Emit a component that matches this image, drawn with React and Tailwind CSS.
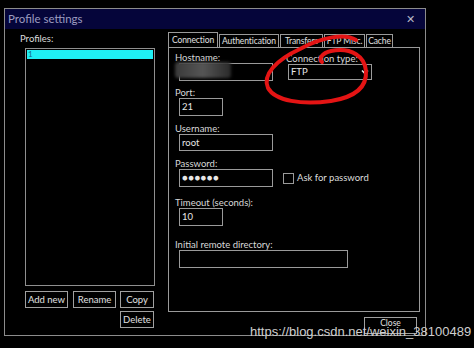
const ui = { fontFamily: 'Lato, "Noto Sans", sans-serif' };

function Field({ w, h = 18, children, className = "" }) {
  return (
    <div
      className={`flex items-center border border-[#9a9a9a] px-[2px] text-[9.5px] leading-none text-[#e6e6e6] ${className}`}
      style={{ width: w, height: h }}
    >
      {children}
    </div>
  );
}

function Label({ children, className = "" }) {
  return <div className={`h-[10px] text-[9.5px] leading-[10px] text-[#d8d8d8] ${className}`}>{children}</div>;
}

function Btn({ children, w, className = "" }) {
  return (
    <div
      className={`flex h-[17px] items-center justify-center border border-[#a0a0a0] text-[9.5px] leading-none text-[#e0e0e0] ${className}`}
      style={{ width: w }}
    >
      {children}
    </div>
  );
}

const tabs = [
  { name: "Connection", w: 50 },
  { name: "Authentication", w: 60 },
  { name: "Transfers", w: 43 },
  { name: "FTP Misc.", w: 41 },
  { name: "Cache", w: 27 },
];

export default function App() {
  return (
    <div className="relative h-[348px] w-[474px] overflow-hidden bg-black" style={ui}>
      <div className="ml-[4px] pt-[8px]">
        <div className="h-[328px] w-[422px] border border-[#8c8c8c]">
          {/* title bar */}
          <div className="flex h-[20px] items-center justify-between bg-[#05053a] pl-[3px] pr-[10px]">
            <span className="text-[11.5px] text-[#9c9cc0]">Profile settings</span>
            <span className="text-[11px] text-[#b8b8c8]">✕</span>
          </div>

          <div className="flex">
            {/* left column */}
            <div className="w-[158px] pl-[15px] pt-[4px]">
              <div className="h-[11px] text-[9.5px] leading-[11px] text-[#dcdcdc]">Profiles:</div>
              <div className="ml-[5px] mt-[4px] h-[238px] w-[130px] border border-[#8f8f8f] p-[1px]">
                <div className="h-[9px] bg-[#1ff0f5] pl-[1px] text-[8px] leading-[9px] text-[#1a6a8a]">1</div>
              </div>
              <div className="ml-[5px] mt-[5px] flex gap-[5px]">
                <Btn w={43}>Add new</Btn>
                <Btn w={43}>Rename</Btn>
                <Btn w={34} className="ml-[-1px]">Copy</Btn>
              </div>
              <div className="ml-[100px] mt-[3px]">
                <Btn w={34}>Delete</Btn>
              </div>
            </div>

            {/* right column */}
            <div className="pl-[5px] pt-[3px]">
              <div className="flex items-end">
                {tabs.map((t, i) => (
                  <div
                    key={t.name}
                    className={`flex items-center justify-center overflow-hidden whitespace-nowrap border border-b-0 border-[#9a9a9a] text-[8.5px] leading-none tracking-[-0.1px] text-[#e0e0e0] ${
                      i === 0 ? "h-[15px]" : "ml-[1px] h-[13px]"
                    }`}
                    style={{ width: t.w }}
                  >
                    {t.name}
                  </div>
                ))}
              </div>
              <div className="h-[265px] w-[252px] border border-[#9a9a9a] pl-[6px] pt-[5px]">
                <div className="flex">
                  <div className="w-[111px]">
                    <Label>Hostname:</Label>
                    <Field w={94} className="ml-[4px]" />
                  </div>
                  <div className="pt-[1px]">
                    <Label>Connection type:</Label>
                    <div className="ml-[2px] flex h-[16px] w-[84px] items-center justify-between border border-[#9a9a9a] pl-[2px] pr-[2px] text-[9.5px] text-[#e6e6e6]">
                      <span>FTP</span>
                      <svg width="8" height="6" viewBox="0 0 8 6">
                        <path d="M1 1.5 L4 4.5 L7 1.5" stroke="#e6e6e6" strokeWidth="1.6" fill="none" />
                      </svg>
                    </div>
                  </div>
                </div>

                <Label className="mt-[7px]">Port:</Label>
                <Field w={44} className="ml-[4px]">21</Field>

                <Label className="mt-[8px]">Username:</Label>
                <Field w={94} h={17} className="ml-[4px]">root</Field>

                <Label className="mt-[8px]">Password:</Label>
                <div className="flex items-center">
                  <Field w={94} className="ml-[4px] text-[8px] tracking-[0.5px]">●●●●●●</Field>
                  <div className="ml-[10px] h-[11px] w-[11px] border border-[#9a9a9a]" />
                  <span className="ml-[3px] text-[9.5px] text-[#dcdcdc]">Ask for password</span>
                </div>

                <Label className="mt-[11px]">Timeout (seconds):</Label>
                <Field w={44} className="ml-[4px]">10</Field>

                <Label className="mt-[14px]">Initial remote directory:</Label>
                <Field w={169} className="ml-[4px]" />
              </div>
              <div className="ml-[196px] mt-[5px]">
                <div className="flex h-[17px] w-[53px] justify-center border border-[#a0a0a0] pt-[1px] text-[8.5px] leading-none text-[#e0e0e0]">
                  Close
                </div>
              </div>
            </div>
          </div>
        </div>
      </div>

      {/* blurred hostname */}
      <div className="absolute left-[175px] top-[62px] h-[16px] w-[56px] rounded-[3px] bg-gradient-to-r from-[#3a3a3a] via-[#555] to-[#2a2a2a] blur-[1.5px]" />

      {/* red marker circle */}
      <svg className="pointer-events-none absolute left-0 top-0" width="474" height="348">
        <path
          d="M356 40 C345 33 322 37 300 49 C276 60 262 75 268 88 C275 101 302 105 331 101 C356 97 367 87 366 71 C365 57 352 47 331 51 C322 53 318 59 322 62"
          stroke="#e41414"
          strokeWidth="4"
          fill="none"
          strokeLinecap="round"
        />
      </svg>

      {/* watermark */}
      <div
        className="absolute left-[250px] top-[325px] text-[13px] leading-none text-[#cfcfcf]"
        style={{ fontFamily: '"Liberation Sans", Arial, sans-serif' }}
      >
        https://blog.csdn.net/weixin_38100489
      </div>
    </div>
  );
}
